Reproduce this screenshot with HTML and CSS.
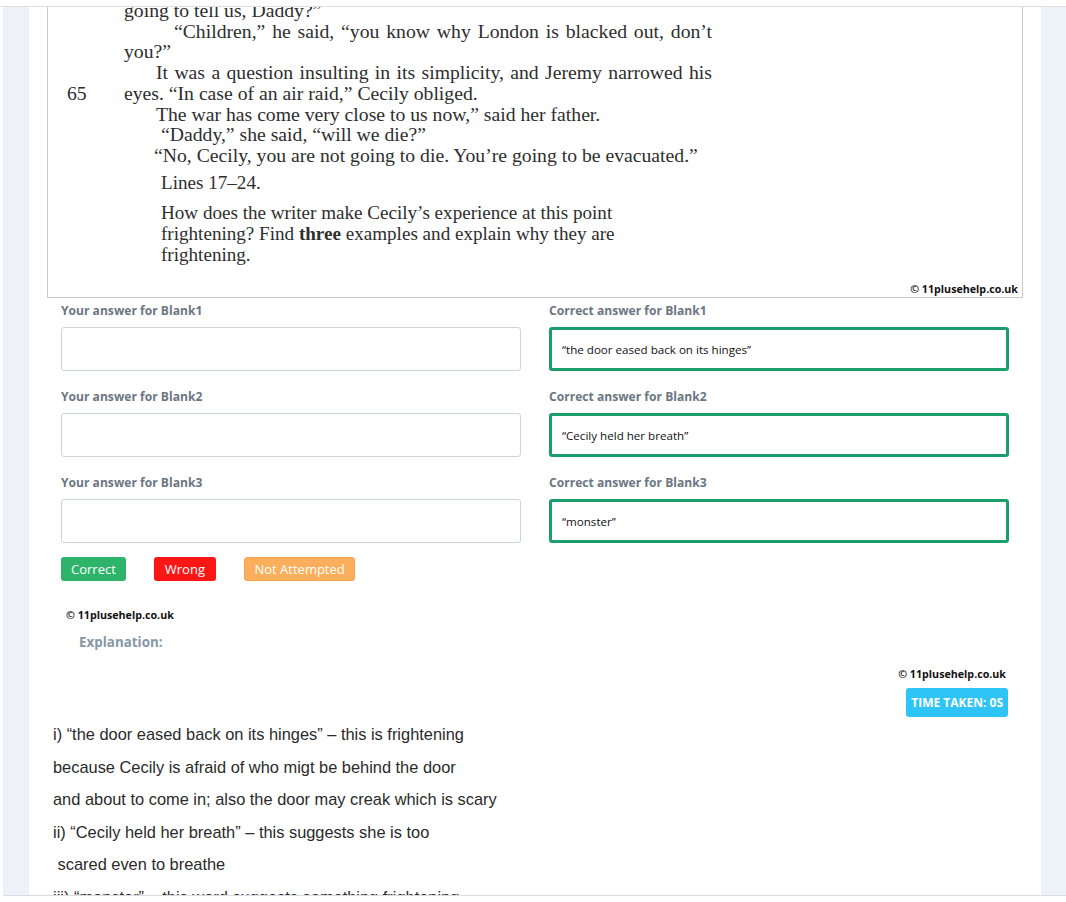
FILE: index.html
```html
<!DOCTYPE html>
<html lang="en">
<head>
<meta charset="utf-8">
<title>Answer review</title>
<link rel="stylesheet" href="styles.css">
</head>
<body>
<div class="topstrip"></div>
<div class="viewport">
  <div class="panel">
    <div class="passage-box">
      <div class="passage">
        <div class="pl"><span class="num"></span><span class="tx">going to tell us, Daddy?”</span></div>
        <div class="pl"><span class="num"></span><span class="tx just ind50">“Children,” he said, “you know why London is blacked out, don’t</span></div>
        <div class="pl"><span class="num"></span><span class="tx">you?”</span></div>
        <div class="pl"><span class="num"></span><span class="tx just ind32">It was a question insulting in its simplicity, and Jeremy narrowed his</span></div>
        <div class="pl"><span class="num">65</span><span class="tx">eyes. “In case of an air raid,” Cecily obliged.</span></div>
        <div class="pl"><span class="num"></span><span class="tx ind32">The war has come very close to us now,” said her father.</span></div>
        <div class="pl"><span class="num"></span><span class="tx ind37">“Daddy,” she said, “will we die?”</span></div>
        <div class="pl"><span class="num"></span><span class="tx ind30">“No, Cecily, you are not going to die. You’re going to be evacuated.”</span></div>
      </div>
      <div class="question">
        <p class="q-lines">Lines 17–24.</p>
        <p class="q-text">How does the writer make Cecily’s experience at this point<br>frightening? Find <b>three</b> examples and explain why they are<br>frightening.</p>
      </div>
      <div class="wm wm-box">© 11plusehelp.co.uk</div>
    </div>

    <div class="answers">
      <div class="field">
        <div class="label">Your answer for Blank1</div>
        <div class="box"></div>
      </div>
      <div class="field">
        <div class="label">Correct answer for Blank1</div>
        <div class="box correct">“the door eased back on its hinges”</div>
      </div>
      <div class="field">
        <div class="label">Your answer for Blank2</div>
        <div class="box"></div>
      </div>
      <div class="field">
        <div class="label">Correct answer for Blank2</div>
        <div class="box correct">“Cecily held her breath”</div>
      </div>
      <div class="field">
        <div class="label">Your answer for Blank3</div>
        <div class="box"></div>
      </div>
      <div class="field">
        <div class="label">Correct answer for Blank3</div>
        <div class="box correct">“monster”</div>
      </div>
    </div>

    <div class="legend">
      <span class="tag tag-correct">Correct</span>
      <span class="tag tag-wrong">Wrong</span>
      <span class="tag tag-na">Not Attempted</span>
    </div>

    <div class="wm wm-left">© 11plusehelp.co.uk</div>
    <div class="expl-title">Explanation:</div>
    <div class="wm wm-right">© 11plusehelp.co.uk</div>
    <div class="time-row"><span class="time">TIME TAKEN: 0S</span></div>

    <div class="explanation">
      <div>i) “the door eased back on its hinges” – this is frightening</div>
      <div>because Cecily is afraid of who migt be behind the door</div>
      <div>and about to come in; also the door may creak which is scary</div>
      <div>ii) “Cecily held her breath” – this suggests she is too</div>
      <div>&nbsp;scared even to breathe</div>
      <div>iii) “monster” – this word suggests something frightening</div>
    </div>
  </div>
</div>
</body>
</html>
```

FILE: styles.css
```css
* { box-sizing: border-box; }
html, body { margin: 0; padding: 0; background: #ffffff; }
body { width: 1066px; height: 902px; overflow: hidden; font-family: "Open Sans", "Liberation Sans", sans-serif; }

.topstrip { height: 7px; background: #ffffff; border-bottom: 1px solid #dcdfe4; }

.viewport {
  height: 889px;
  margin-left: 3px;
  padding: 0 25px 0 26px;
  background: #edf2f9;
  border-bottom: 1px solid #d9dce1;
  overflow: hidden;
}
.panel { display: flow-root; width: 1012px; height: 100%; background: #ffffff; padding: 0 18px; }

/* passage image */
.passage-box {
  margin-top: -12px;
  border: 1px solid #c9cbce;
  padding: 4px 4px 1px 0;
  font-family: "Liberation Serif", "Times New Roman", serif;
  color: #2e2e2e;
}
.passage { font-size: 19.7px; line-height: 20.7px; }
.pl { display: flex; }
.num { width: 76px; flex: none; padding-left: 19px; }
.tx { width: 588px; white-space: nowrap; }
.just { text-align: justify; text-align-last: justify; }
.ind50 { padding-left: 50px; }
.ind32 { padding-left: 32px; }
.ind37 { padding-left: 37px; }
.ind30 { padding-left: 30px; }
.question { padding-left: 113px; font-size: 19.1px; }
.question p { margin: 0; }
.q-lines { margin-top: 7px !important; line-height: 20.7px; }
.q-text { margin-top: 9px !important; line-height: 21px; }

.wm { font-family: "Open Sans", "Liberation Sans", sans-serif; font-weight: 700; font-size: 10.7px; line-height: 14px; color: #111; }
.wm-box { text-align: right; margin-top: 17px; }

/* answers */
.answers {
  display: grid;
  grid-template-columns: 460px 460px;
  column-gap: 28px;
  padding: 0 14px;
  margin-top: 3px;
}
.field { margin-bottom: 16px; }
.label { font-size: 12.1px; font-weight: 700; line-height: 18px; color: #6b7682; padding-top: 1px; margin-bottom: 7px; }
.box {
  height: 44px;
  border: 1px solid #ced4da;
  border-radius: 3px;
  background: #fff;
  font-size: 11.6px;
  color: #111;
  display: flex;
  align-items: center;
  padding: 0 10px;
}
.box.correct { border: 3px solid #1b9e6b; }

.legend { display: flex; gap: 28px; padding-left: 14px; margin-top: -2px; }
.tag { height: 24px; line-height: 24px; border-radius: 3px; color: #fff; font-size: 13px; }
.tag-correct { background: #2db46a; padding: 0 10px; }
.tag-wrong { background: #fb1616; padding: 0 11px; }
.tag-na { background: #fbae5b; padding: 0 9.5px; border: 1px solid #f6a24a; line-height: 22px; }

.wm-left { margin-top: 27px; padding-left: 19px; }
.expl-title { margin-top: 10px; padding-left: 32px; font-size: 13.4px; font-weight: 700; line-height: 20px; color: #8797a8; }
.wm-right { margin-top: 15px; text-align: right; padding-right: 17px; }
.time-row { display: flex; justify-content: flex-end; padding-right: 15px; margin-top: 7px; }
.time { height: 29px; line-height: 29px; padding: 0 5px; background: #2ec5f6; color: #fff; font-size: 12px; font-weight: 700; border-radius: 3px; }

.explanation {
  margin-top: 1px;
  padding-left: 6px;
  font-family: "Liberation Sans", Arial, sans-serif;
  font-size: 16.4px;
  line-height: 32.5px;
  color: #2a2a2a;
}
.explanation div { white-space: nowrap; }
```
